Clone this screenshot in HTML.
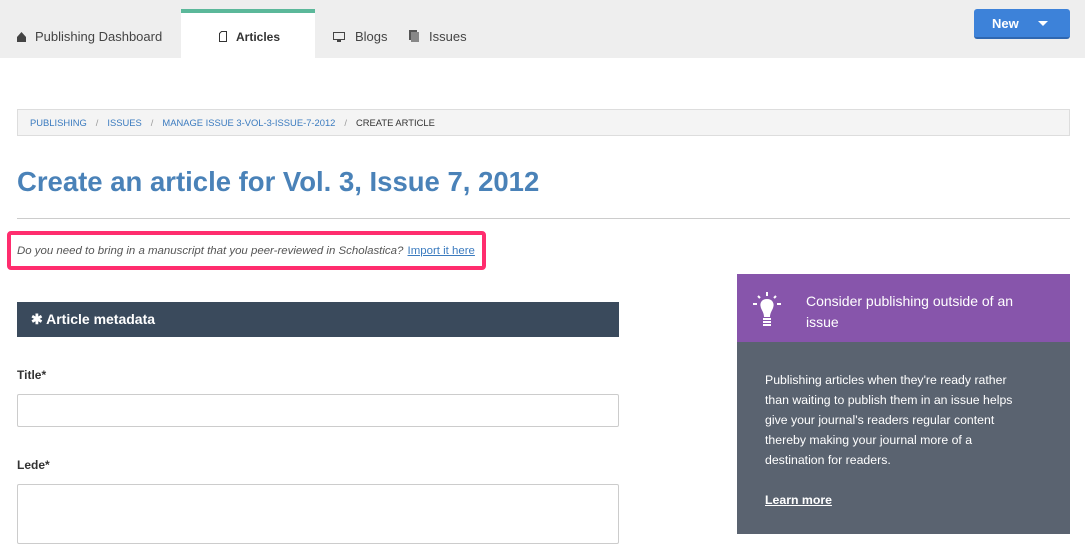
<!DOCTYPE html>
<html><head><style>
*{box-sizing:border-box;margin:0;padding:0}
body{width:1085px;height:534px;overflow:hidden;background:#fff;font-family:"Liberation Sans",sans-serif;position:relative;color:#333}
.nav{position:absolute;left:0;top:0;width:1085px;height:58px;background:#eeeeee}
.tab{position:absolute;top:29px;font-size:13px;color:#444}
.active{position:absolute;left:181px;top:9px;width:134px;height:49px;background:#fff;border-top:4px solid #5bb89a}
.btn{position:absolute;left:974px;top:9px;width:96px;height:30px;background:#3d82d9;border-radius:3px;border-bottom:2px solid #2f67b0;color:#fff;font-weight:bold;font-size:13px}
.crumb{position:absolute;left:17px;top:109px;width:1053px;height:27px;background:#f4f4f4;border:1px solid #ddd;font-size:9.4px;padding:7px 12px;color:#333}
.crumb a{color:#3b7bbf;text-decoration:none}
.crumb s{text-decoration:none;color:#999;margin:0 9px}
h1{position:absolute;left:17px;top:166px;font-size:27.5px;color:#4a82b8;font-weight:bold}
.hr{position:absolute;left:17px;top:218px;width:1053px;height:1px;background:#ccc}
.pink{position:absolute;left:7px;top:231px;width:479px;height:39px;border:4px solid #ff2d6e;border-radius:4px;font-size:11.45px;font-style:italic;color:#555;padding:10px 0 0 6px;white-space:nowrap}
.pink a{font-style:normal;color:#3b7bbf;text-decoration:underline;margin-left:1px}
.meta{position:absolute;left:17px;top:302px;width:602px;height:35px;background:#3a4a5c;color:#fff;font-weight:bold;font-size:14px;padding:9px 14px}
.lbl{position:absolute;left:17px;font-size:12px;font-weight:bold;color:#333}
.inp{position:absolute;left:17px;width:602px;border:1px solid #ccc;border-radius:2px}
.side{position:absolute;left:737px;top:274px;width:333px;height:260px;background:#5a6370}
.sh{height:68px;background:#8755ab;color:#fff;font-size:14px;padding:17px 40px 0 69px;line-height:21px}
.sb{color:#fff;font-size:12.3px;line-height:20px;padding:28px 42px 0 28px}
</style></head><body>
<div class="nav"></div>
<div class="active"></div>
<div class="tab" style="left:17px"><svg width="9" height="10" style="vertical-align:-1px;margin-right:9px"><path d="M0 5L4.5 0 9 5V10H0Z" fill="#444"/></svg>Publishing Dashboard</div>
<div class="tab" style="left:219px;font-weight:bold;font-size:12px;top:30px;color:#333"><svg width="8" height="11" style="vertical-align:-1px;margin-right:9px"><path d="M2.5 .5H7.5V10.5H.5V2.5Z" fill="none" stroke="#333"/></svg>Articles</div>
<div class="tab" style="left:333px"><svg width="12" height="10" style="vertical-align:-1px;margin-right:10px"><rect x=".5" y=".5" width="11" height="7" fill="none" stroke="#444"/><rect x="4" y="8" width="4" height="2" fill="#444"/></svg>Blogs</div>
<div class="tab" style="left:409px"><svg width="10" height="12" style="vertical-align:-1px;margin-right:10px"><rect x="0" y="0" width="8" height="10" fill="#555"/><rect x="2" y="2" width="8" height="10" fill="#888"/></svg>Issues</div>
<div class="btn"><span style="position:absolute;left:18px;top:7px">New</span><svg width="10" height="6" style="position:absolute;left:64px;top:12px"><path d="M0 0H10L5 5Z" fill="#fff"/></svg></div>
<div class="crumb"><a>PUBLISHING</a><s>/</s><a>ISSUES</a><s>/</s><a>MANAGE ISSUE 3-VOL-3-ISSUE-7-2012</a><s>/</s>CREATE ARTICLE</div>
<h1>Create an article for Vol. 3, Issue 7, 2012</h1>
<div class="hr"></div>
<div class="pink">Do you need to bring in a manuscript that you peer-reviewed in Scholastica? <a>Import it here</a></div>
<div class="meta">✱ Article metadata</div>
<div class="lbl" style="top:368px">Title*</div>
<div class="inp" style="top:394px;height:33px"></div>
<div class="lbl" style="top:458px">Lede*</div>
<div class="inp" style="top:484px;height:60px"></div>
<div class="side">
<div class="sh"><svg width="32" height="36" style="position:absolute;left:14px;top:18px"><g stroke="#fff" stroke-width="2"><line x1="2" y1="12" x2="6" y2="12"/><line x1="26" y1="12" x2="30" y2="12"/><line x1="16" y1="0" x2="16" y2="4"/><line x1="7" y1="4" x2="9" y2="6"/><line x1="25" y1="4" x2="23" y2="6"/><line x1="12" y1="27" x2="20" y2="27"/><line x1="12" y1="30" x2="20" y2="30"/><line x1="12" y1="33" x2="20" y2="33"/></g><path d="M16 7C10 7 9 12 9.5 14 10 18 13 20 13 25H19C19 20 22 18 22.5 14 23 12 22 7 16 7Z" fill="#fff"/></svg>Consider publishing outside of an issue</div>
<div class="sb">Publishing articles when they're ready rather than waiting to publish them in an issue helps give your journal's readers regular content thereby making your journal more of a destination for readers.<br><br><u style="font-weight:bold">Learn more</u></div>
</div>
</body></html>
